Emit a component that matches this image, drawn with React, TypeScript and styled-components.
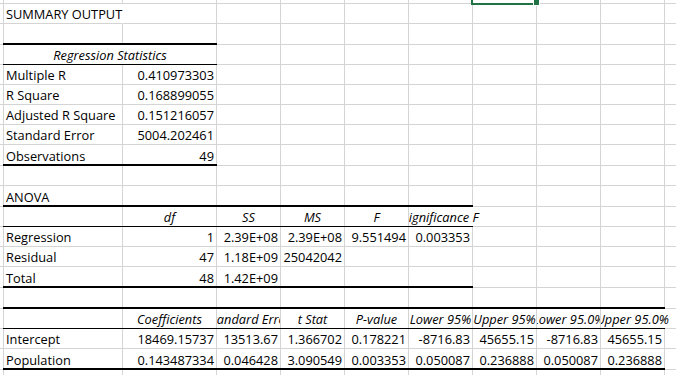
import React from 'react';
import styled, { createGlobalStyle, css } from 'styled-components';

const Global = createGlobalStyle`
  html, body { margin: 0; padding: 0; background: #fff; overflow: hidden; }
  body { font-family: "Open Sans", "Liberation Sans", sans-serif; }
`;

const COLS = [4, 119, 94, 64, 64, 64, 64, 64, 64, 64, 64];
const ROWS = [4, 20, 21, 20, 20, 20, 20, 20, 21, 20, 21, 20, 20, 20, 21, 21, 20, 20, 21, 20];

type Rule = 'thin' | 'thick';
type Align = 'l' | 'r' | 'c';
interface Spec {
  t?: string;
  a?: Align;
  i?: boolean;
  span?: number;
  rule?: Rule;
  open?: boolean;
  sel?: boolean;
}

const GRID = '#d4d4d4';
const GREEN = '#217346';

const Sheet = styled.div`
  display: grid;
  grid-template-columns: ${COLS.map((c) => `${c}px`).join(' ')};
  grid-template-rows: ${ROWS.map((r) => `${r}px`).join(' ')};
  width: 676px;
  height: 375px;
  overflow: hidden;
  font-size: 12.8px;
  color: #000;
`;

const Cell = styled.div<{ $span: number; $rule?: Rule; $open?: boolean }>`
  box-sizing: border-box;
  position: relative;
  grid-column: span ${(p) => p.$span};
  min-width: 0;
  display: flex;
  align-items: flex-end;
  border-right: 1px solid ${(p) => (p.$open ? 'transparent' : GRID)};
  border-bottom: 1px solid ${GRID};
  ${(p) =>
    p.$rule &&
    css`
      &::after {
        content: '';
        position: absolute;
        left: -1px;
        right: -1px;
        bottom: -1px;
        height: ${p.$rule === 'thick' ? 2 : 1}px;
        background: #000;
      }
    `}
`;

const Content = styled.div<{ $align: Align; $italic?: boolean; $open?: boolean }>`
  flex: 1;
  min-width: 0;
  display: flex;
  justify-content: ${(p) => (p.$align === 'l' ? 'flex-start' : p.$align === 'r' ? 'flex-end' : 'center')};
  padding: 0 2px 1px 2px;
  line-height: 15px;
  white-space: nowrap;
  font-style: ${(p) => (p.$italic ? 'italic' : 'normal')};
  clip-path: ${(p) => (p.$open ? 'inset(-4px -120px -4px 0)' : 'inset(-4px 0 -4px 0)')};
`;

const SelBottom = styled.div`
  position: absolute;
  left: -2px;
  top: 3px;
  width: 62px;
  height: 2px;
  background: ${GREEN};
  z-index: 3;
`;

const SelLeft = styled.div`
  position: absolute;
  left: -2px;
  top: 0;
  width: 2px;
  height: 5px;
  background: ${GREEN};
  z-index: 3;
`;

const Handle = styled.div`
  position: absolute;
  left: 60px;
  top: 0;
  width: 5px;
  height: 5px;
  background: ${GREEN};
  border: 1px solid #fff;
  border-top: none;
  z-index: 3;
`;

const h = (t: string, extra: Partial<Spec> = {}): Spec => ({ t, a: 'c', i: true, ...extra });

function row(vals: (string | Spec | null)[], rule?: Rule, ruleTo = 0): Spec[] {
  const cells: Spec[] = [{}];
  let c = 0;
  let idx = 0;
  while (c < 10) {
    const v = vals[idx];
    const s: Spec = v == null ? {} : typeof v === 'string' ? { t: v, a: c === 0 ? 'l' : 'r' } : { ...v };
    if (rule && c < ruleTo) s.rule = rule;
    cells.push(s);
    c += s.span ?? 1;
    idx += 1;
  }
  return cells;
}

const SHEET: Spec[][] = [
  row([null, null, null, null, null, null, { sel: true }]),
  row([{ t: 'SUMMARY OUTPUT', a: 'l', open: true }]),
  row([], 'thick', 2),
  row([{ t: 'Regression Statistics', a: 'c', i: true, span: 2 }], 'thin', 2),
  row(['Multiple R', '0.410973303']),
  row(['R Square', '0.168899055']),
  row(['Adjusted R Square', '0.151216057']),
  row(['Standard Error', '5004.202461']),
  row(['Observations', '49'], 'thick', 2),
  row([]),
  row(['ANOVA'], 'thick', 6),
  row([null, h('df'), h('SS'), h('MS'), h('F'), h('Significance F', { open: true })], 'thin', 6),
  row(['Regression', '1', '2.39E+08', '2.39E+08', '9.551494', '0.003353']),
  row(['Residual', '47', '1.18E+09', '25042042']),
  row(['Total', '48', '1.42E+09'], 'thick', 6),
  row([], 'thick', 9),
  row(
    [
      null,
      h('Coefficients'),
      h('Standard Error'),
      h('t Stat'),
      h('P-value'),
      h('Lower 95%'),
      h('Upper 95%'),
      h('Lower 95.0%'),
      h('Upper 95.0%', { open: true }),
    ],
    'thin',
    9,
  ),
  row(['Intercept', '18469.15737', '13513.67', '1.366702', '0.178221', '-8716.83', '45655.15', '-8716.83', '45655.15']),
  row(
    ['Population', '0.143487334', '0.046428', '3.090549', '0.003353', '0.050087', '0.236888', '0.050087', '0.236888'],
    'thick',
    9,
  ),
  row([]),
];

export default function App() {
  return (
    <>
      <Global />
      <Sheet>
        {SHEET.map((cells, r) =>
          cells.map((s, c) => (
            <Cell key={`${r}-${c}`} $span={s.span ?? 1} $rule={s.rule} $open={s.open}>
              <Content $align={s.a ?? 'l'} $italic={s.i} $open={s.open}>
                {s.t}
              </Content>
              {s.sel && (
                <>
                  <SelLeft />
                  <SelBottom />
                  <Handle />
                </>
              )}
            </Cell>
          )),
        )}
      </Sheet>
    </>
  );
}
